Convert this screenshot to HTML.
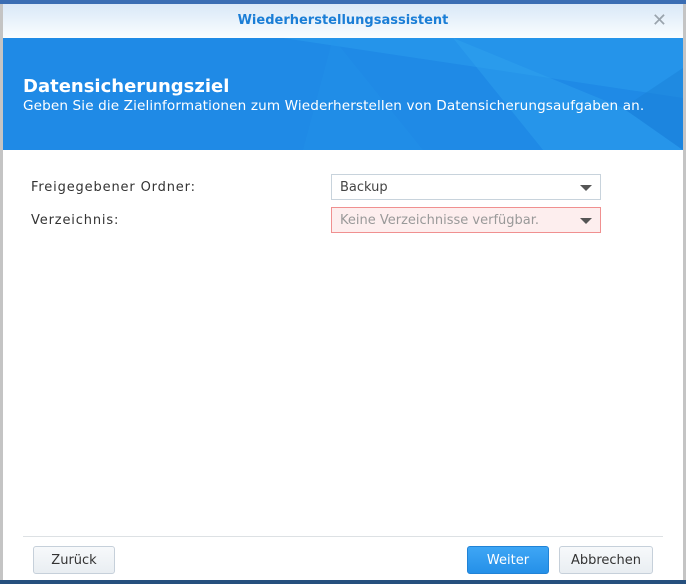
<!DOCTYPE html>
<html><head><style>
body{margin:0;width:686px;height:584px;overflow:hidden;background:#fff;font-family:"DejaVu Sans",sans-serif;position:relative}
.top{position:absolute;left:0;top:0;width:686px;height:4px;background:#3a6db3}
.bot{position:absolute;left:0;top:580px;width:686px;height:4px;background:#26507e}
.lb{position:absolute;left:0;top:4px;width:3px;height:576px;background:#c4c4c4}
.rb{position:absolute;right:0;top:4px;width:3px;height:576px;background:#c4c4c4}
.title{position:absolute;left:3px;top:4px;width:680px;height:34px;background:linear-gradient(#d9e8f7,#fafdff);text-align:center;line-height:34px;color:#1b7ed6;font-weight:bold;font-size:13px}
.x{position:absolute;right:19px;top:4px;line-height:34px;color:#9aa4ad;font-size:18px}
.ban{position:absolute;left:3px;top:38px;width:680px;height:112px;background:#1f8ae6;overflow:hidden}
.ban h1{position:absolute;left:20px;top:38px;margin:0;font-size:18px;color:#fff}
.ban p{position:absolute;left:20px;top:60px;margin:0;font-size:13.6px;color:#fff;letter-spacing:0.12px;white-space:nowrap}
.lbl{position:absolute;left:31px;font-size:13px;color:#333;letter-spacing:0.85px}
.sel{position:absolute;left:331px;height:26px;border:1px solid #c8d3dc;font-size:13px;line-height:25px;padding-left:8px;box-sizing:border-box;width:270px;color:#444}
.sel.e{border-color:#f09090;background:#fdeeee;color:#999}
.tri{position:absolute;right:8px;top:10px;border-left:6px solid transparent;border-right:6px solid transparent;border-top:6px solid #555}
.hr{position:absolute;left:23px;top:536px;width:640px;height:1px;background:#dde1e4}
.btn{position:absolute;top:546px;height:28px;border:1px solid #c6d0da;border-radius:3px;background:linear-gradient(#f7f9fb,#e9eef2);box-sizing:border-box;text-align:center;line-height:27px;font-size:13px;color:#333}
</style></head><body>
<div class="top"></div><div class="lb"></div><div class="rb"></div><div class="bot"></div>
<div class="title">Wiederherstellungsassistent</div><div class="x">✕</div>
<div class="ban">
<svg width="680" height="112" style="position:absolute;left:0;top:0">
<polygon points="280,0 680,0 680,60" fill="#2a9bec" opacity=".6"/>
<polygon points="450,0 620,70 680,112 540,112" fill="#35aaf0" opacity=".35"/>
<polygon points="620,70 680,30 680,112" fill="#1a7fd8" opacity=".5"/>
<polygon points="330,0 420,112 300,112" fill="#2596ea" opacity=".3"/>
</svg>
<h1>Datensicherungsziel</h1>
<p>Geben Sie die Zielinformationen zum Wiederherstellen von Datensicherungsaufgaben an.</p>
</div>
<div class="lbl" style="top:180px">Freigegebener Ordner:</div>
<div class="lbl" style="top:213px">Verzeichnis:</div>
<div class="sel" style="top:174px">Backup<div class="tri"></div></div>
<div class="sel e" style="top:207px">Keine Verzeichnisse verfügbar.<div class="tri"></div></div>
<div class="hr"></div>
<div class="btn" style="left:33px;width:82px">Zurück</div>
<div class="btn" style="left:467px;width:82px;background:linear-gradient(#3ea6f5,#2590e8);border-color:#2183d6;color:#fff">Weiter</div>
<div class="btn" style="left:559px;width:94px">Abbrechen</div>
</body></html>
